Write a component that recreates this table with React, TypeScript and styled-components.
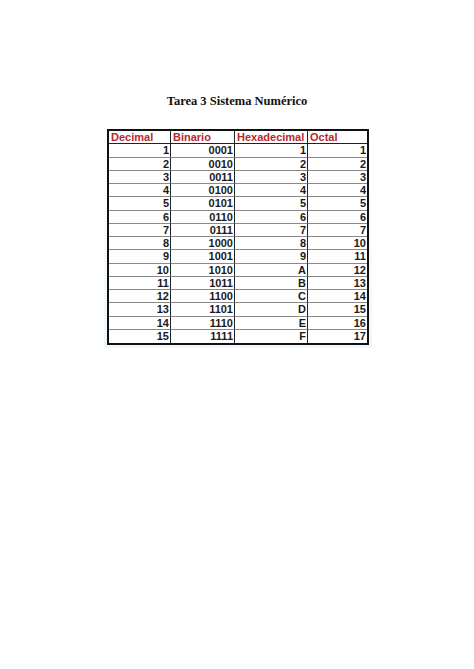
import React, {FC} from "react";
import styled, {createGlobalStyle} from "styled-components";

const GlobalStyle = createGlobalStyle`
  html, body {
    margin: 0;
    padding: 0;
    background: #ffffff;
  }
`

const Page = styled.div`
  width: 474px;
  height: 669px;
  display: flex;
  flex-direction: column;
  align-items: center;
`

const Title = styled.h1`
  margin: 94px 0 0 0;
  font-family: "Liberation Serif", "Times New Roman", serif;
  font-size: 12.5px;
  font-weight: bold;
  color: #111;
  line-height: 15px;
`

const Frame = styled.div`
  margin-top: 14px;
  margin-left: 2px;
  padding: 6px 3px 3px 3px;
  background: linear-gradient(#ffffff, #eef8fc);
`

const Table = styled.div`
  display: grid;
  grid-template-columns: 62px 64px 73px 59px;
  grid-auto-rows: 13.25px;
  border: 2px solid #111;
  background: #fff;
`

const Cell = styled.div<{ head?: boolean, last?: boolean, lastRow?: boolean }>`
  font-family: "Liberation Sans", Arial, sans-serif;
  font-size: 11px;
  font-weight: bold;
  line-height: 12px;
  color: ${props => props.head ? "#b8282c" : "#1a1a1a"};
  text-align: ${props => props.head ? "left" : "right"};
  padding: 0 1px 0 2px;
  border-right: ${props => props.last ? "none" : "1.5px solid #222"};
  border-bottom: ${props => props.lastRow ? "none" : props.head ? "1.5px solid #222" : "1.5px solid #8a8a8a"};
  overflow: hidden;
  white-space: nowrap;
`

const hex = "0123456789ABCDEF"

const rows = Array.from({length: 15}, (_, i) => {
  const n = i + 1
  return [String(n), n.toString(2).padStart(4, "0"), hex[n], n.toString(8)]
})

const headers = ["Decimal", "Binario", "Hexadecimal", "Octal"]

const App: FC = () => {
  return (
    <Page>
      <GlobalStyle/>
      <Title>Tarea 3 Sistema Numérico</Title>
      <Frame>
        <Table>
          {headers.map((h, j) => (
            <Cell head last={j === 3} key={`h-${h}`}>{h}</Cell>
          ))}
          {rows.map((row, i) => row.map((v, j) => (
            <Cell key={`c-${i}-${j}`} last={j === 3} lastRow={i === rows.length - 1}>{v}</Cell>
          )))}
        </Table>
      </Frame>
    </Page>
  )
}

export default App;
